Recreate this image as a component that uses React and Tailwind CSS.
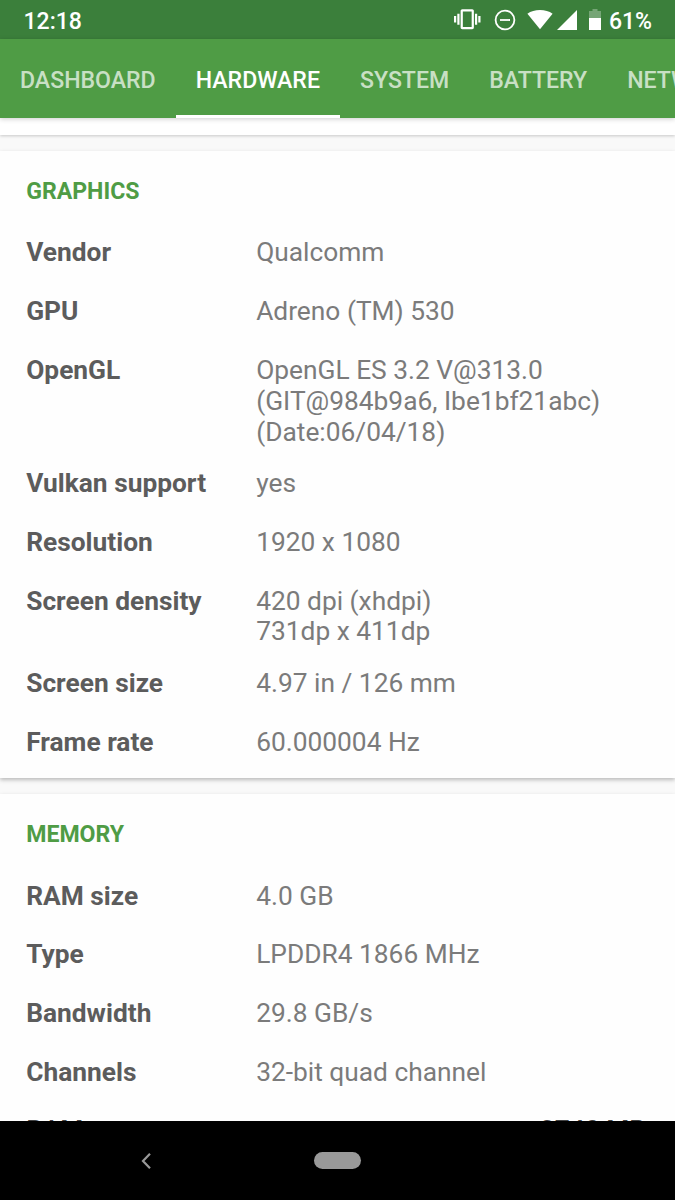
import React from "react";

const tabs = ["Dashboard", "Hardware", "System", "Battery", "Network"];

const graphics = [
  { label: "Vendor", value: ["Qualcomm"] },
  { label: "GPU", value: ["Adreno (TM) 530"] },
  {
    label: "OpenGL",
    value: ["OpenGL ES 3.2 V@313.0", "(GIT@984b9a6, Ibe1bf21abc)", "(Date:06/04/18)"],
  },
  { label: "Vulkan support", value: ["yes"] },
  { label: "Resolution", value: ["1920 x 1080"] },
  { label: "Screen density", value: ["420 dpi (xhdpi)", "731dp x 411dp"] },
  { label: "Screen size", value: ["4.97 in / 126 mm"] },
  { label: "Frame rate", value: ["60.000004 Hz"] },
];

const memory = [
  { label: "RAM size", value: ["4.0 GB"] },
  { label: "Type", value: ["LPDDR4 1866 MHz"] },
  { label: "Bandwidth", value: ["29.8 GB/s"] },
  { label: "Channels", value: ["32-bit quad channel"] },
];

const StatusBar = () => (
  <div className="flex h-[39px] shrink-0 items-center justify-between bg-[#3b7f3b] pl-[23.5px] pr-[23px] text-[23px] font-medium text-white">
    <span className="pt-[5px]">12:18</span>
    <div className="flex items-center">
      {/* vibrate */}
      <svg className="h-[26.5px] w-[26.5px]" viewBox="0 0 24 24" fill="currentColor">
        <path d="M0 15h2V9H0v6zm3 2h2V7H3v10zm19-8v6h2V9h-2zm-3 8h2V7h-2v10zM16.5 3h-9C6.67 3 6 3.67 6 4.5v15c0 .83.67 1.5 1.5 1.5h9c.83 0 1.5-.67 1.5-1.5v-15c0-.83-.67-1.5-1.5-1.5zM16 19H8V5h8v14z" />
      </svg>
      {/* do not disturb */}
      <svg className="ml-[13px] mr-[-0.8px] h-[22px] w-[22px]" viewBox="0 0 22 22" fill="none" stroke="currentColor" strokeWidth="1.8">
        <circle cx="11" cy="11" r="9.4" />
        <path d="M6 11h10" />
      </svg>
      {/* wifi */}
      <svg className="ml-3 h-5 w-[26px]" viewBox="0 0 26 20" fill="currentColor">
        <path d="M13 19.2L.4 3.700C3.800 1.200 8.200 0 13 0s9.200 1.200 12.600 3.700z" />
      </svg>
      {/* signal */}
      <svg className="ml-1 h-5 w-5" viewBox="0 0 20 20" fill="currentColor">
        <path d="M0 20L20 0v20z" />
      </svg>
      {/* battery */}
      <svg className="ml-3 h-[21px] w-3" viewBox="0 0 12 21" fill="currentColor">
        <path opacity=".3" d="M3.500 0h5v2H12v7H0V2h3.500z" />
        <path d="M0 9h12v12H0z" />
      </svg>
      <span className="ml-2 pt-[5px]">61%</span>
    </div>
  </div>
);

const TabBar = ({ active }) => (
  <div className="z-10 flex h-[79px] shrink-0 overflow-hidden bg-[#4f9c45] text-[23.1px] font-medium uppercase shadow-[0_1px_5px_rgba(0,0,0,0.2)]">
    {tabs.map((tab) => (
      <div
        key={tab}
        className={`flex shrink-0 items-center border-b-[3px] px-5 pt-2 ${
          tab === active ? "border-white text-white" : "border-transparent text-white/70"
        }`}
      >
        {tab}
      </div>
    ))}
  </div>
);

const Row = ({ label, value }) => (
  <div className="flex min-h-[58.75px] pb-[20.7px] leading-[30.8px] last:min-h-0 last:pb-[20.7px]">
    <div className="w-[230px] shrink-0 font-bold text-[#5c5c5c]">{label}</div>
    <div className="text-[#7b7b7b]">
      {value.map((line) => (
        <div key={line}>{line}</div>
      ))}
    </div>
  </div>
);

const Card = ({ title, rows, children }) => (
  <div className="shrink-0 bg-[#fefefe] px-[26.2px] pt-[27.8px] text-[26.32px] shadow-[0_2px_4px_rgba(0,0,0,0.25)]">
    <h2 className="mb-[32.2px] text-[23.1px] font-bold uppercase leading-[27px] text-[#4f9c45]">
      {title}
    </h2>
    {rows.map((row) => (
      <Row key={row.label} {...row} />
    ))}
    {children}
  </div>
);

const NavBar = () => (
  <div className="z-10 grid h-[79px] shrink-0 grid-cols-[292px_91px_292px] items-center justify-items-center bg-black text-[#999]">
    <svg className="h-4 w-[10px]" viewBox="0 0 10 16" fill="none" stroke="currentColor" strokeWidth="2.2">
      <path d="M9 .8L2 8l7 7.200" />
    </svg>
    <div className="h-[17px] w-[47px] rounded-full bg-[#999]" />
  </div>
);

export default function App() {
  return (
    <div className="flex h-[1200px] w-[675px] flex-col overflow-hidden bg-[#f9f9f9] font-['Roboto',sans-serif]">
      <StatusBar />
      <TabBar active="Hardware" />
      <div className="flex min-h-0 flex-1 flex-col gap-[15.5px] overflow-hidden">
        <div className="h-[17px] shrink-0 bg-white shadow-[0_1px_3px_rgba(0,0,0,0.2)]" />
        <Card title="Graphics" rows={graphics} />
        <Card title="Memory" rows={memory}>
          <div className="flex justify-between pr-[3px] font-medium leading-[29.5px] text-[#444]">
            <span>RAM</span>
            <span>3740 MB</span>
          </div>
        </Card>
      </div>
      <NavBar />
    </div>
  );
}
